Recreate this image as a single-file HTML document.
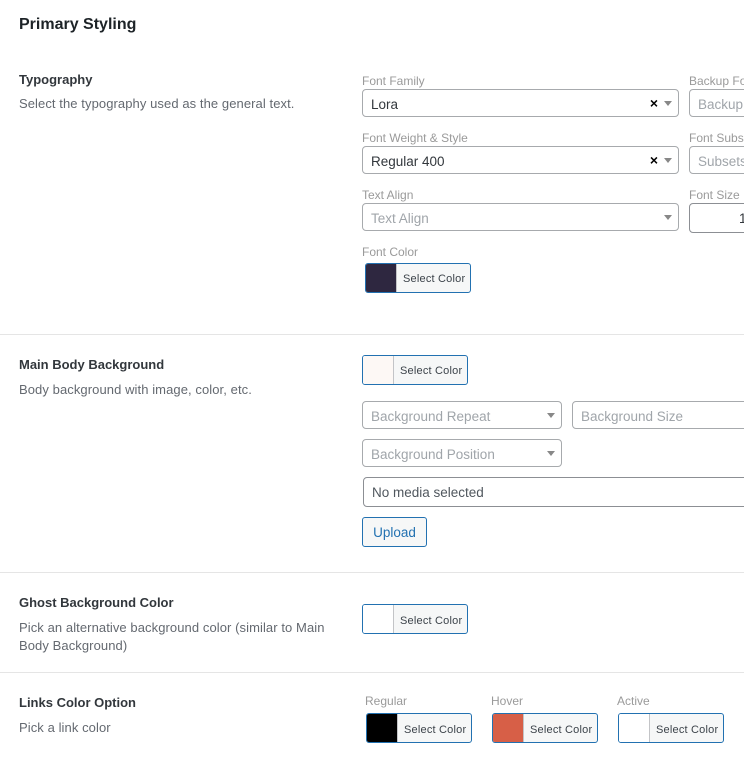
<!DOCTYPE html>
<html>
<head>
<meta charset="utf-8">
<style>
html,body{margin:0;padding:0;background:#fff}
body{position:relative;width:744px;height:758px;overflow:hidden;font-family:"Liberation Sans",sans-serif;font-size:13px;color:#50575e}
.a{position:absolute;white-space:nowrap}
.h{font-size:16px;font-weight:bold;color:#1d2327;left:19px;top:15px;line-height:20px}
.t{font-size:13px;font-weight:bold;color:#32373c;left:19px;line-height:18px}
.d{font-size:13px;letter-spacing:.08px;color:#646970;left:19px;line-height:19px}
.l{font-size:12px;color:#9a9a9a;line-height:14px}
.s{box-sizing:border-box;height:28px;border:1px solid #a7aaad;border-radius:4px;background:#fff;font-size:13.5px;line-height:30px;padding-left:8px;color:#a0a5aa}
.s.v{color:#32373c}
.ar{position:absolute;width:0;height:0;border-left:4px solid transparent;border-right:4px solid transparent;border-top:5px solid #888;top:11px;right:6px}
.x{position:absolute;right:20px;top:0;font-size:14px;font-weight:bold;color:#000;line-height:27px}
.c{box-sizing:border-box;width:106px;height:30px;border:1px solid #2271b1;border-radius:3px;background:#f6f7f7;overflow:hidden}
.c i{position:absolute;left:0;top:0;bottom:0;width:30px;border-right:1px solid #c3c4c7}
.c b{position:absolute;left:37px;top:0;font-weight:normal;font-size:11px;line-height:31px;color:#3c434a;letter-spacing:.2px}
.c.n b{line-height:33px}
.r{height:1px;background:#e5e5e5;left:0;width:744px}
</style>
</head>
<body>
<div class="a h">Primary Styling</div>

<div class="a t" style="top:71px">Typography</div>
<div class="a d" style="top:94px">Select the typography used as the general text.</div>

<div class="a l" style="left:362px;top:74px">Font Family</div>
<div class="a s v" style="left:362px;top:89px;width:317px">Lora<span class="x">×</span><span class="ar"></span></div>
<div class="a l" style="left:689px;top:74px">Backup Font</div>
<div class="a s" style="left:689px;top:89px;width:317px">Backup Font</div>

<div class="a l" style="left:362px;top:131px">Font Weight &amp; Style</div>
<div class="a s v" style="left:362px;top:146px;width:317px">Regular 400<span class="x">×</span><span class="ar"></span></div>
<div class="a l" style="left:689px;top:131px">Font Subsets</div>
<div class="a s" style="left:689px;top:146px;width:317px">Subsets</div>

<div class="a l" style="left:362px;top:188px">Text Align</div>
<div class="a s" style="left:362px;top:203px;width:317px">Text Align<span class="ar"></span></div>
<div class="a l" style="left:689px;top:188px">Font Size</div>
<div class="a s v" style="left:689px;top:203px;width:317px;height:30px;border-color:#8c8f94;line-height:30px;padding-left:49px">1</div>

<div class="a l" style="left:362px;top:245px">Font Color</div>
<div class="a c" style="left:365px;top:263px"><i style="background:#2e2740"></i><b>Select Color</b></div>

<div class="a r" style="top:334px"></div>

<div class="a t" style="top:356px">Main Body Background</div>
<div class="a d" style="top:380px">Body background with image, color, etc.</div>

<div class="a c" style="left:362px;top:355px"><i style="background:#fdf8f5"></i><b>Select Color</b></div>
<div class="a s" style="left:362px;top:401px;width:200px">Background Repeat<span class="ar"></span></div>
<div class="a s" style="left:572px;top:401px;width:317px">Background Size</div>
<div class="a s" style="left:362px;top:439px;width:200px">Background Position<span class="ar"></span></div>
<div class="a s" style="left:363px;top:477px;width:500px;height:30px;border-color:#8c8f94;line-height:30px;color:#50575e">No media selected</div>
<div class="a" style="left:362px;top:517px;box-sizing:border-box;width:65px;height:30px;border:1px solid #2271b1;border-radius:3px;background:#f6f7f7;color:#2271b1;font-size:13.5px;line-height:29px;text-align:center">Upload</div>

<div class="a r" style="top:572px"></div>

<div class="a t" style="top:594px">Ghost Background Color</div>
<div class="a d" style="top:618px">Pick an alternative background color (similar to Main</div>
<div class="a d" style="top:636px">Body Background)</div>
<div class="a c n" style="left:362px;top:604px"><i style="background:#fff"></i><b>Select Color</b></div>

<div class="a r" style="top:672px"></div>

<div class="a t" style="top:694px">Links Color Option</div>
<div class="a d" style="top:718px">Pick a link color</div>

<div class="a l" style="left:365px;top:694px">Regular</div>
<div class="a l" style="left:491px;top:694px">Hover</div>
<div class="a l" style="left:617px;top:694px">Active</div>
<div class="a c n" style="left:366px;top:713px"><i style="background:#000"></i><b>Select Color</b></div>
<div class="a c n" style="left:492px;top:713px"><i style="background:#d75f47"></i><b>Select Color</b></div>
<div class="a c n" style="left:618px;top:713px"><i style="background:#fff"></i><b>Select Color</b></div>
</body>
</html>
